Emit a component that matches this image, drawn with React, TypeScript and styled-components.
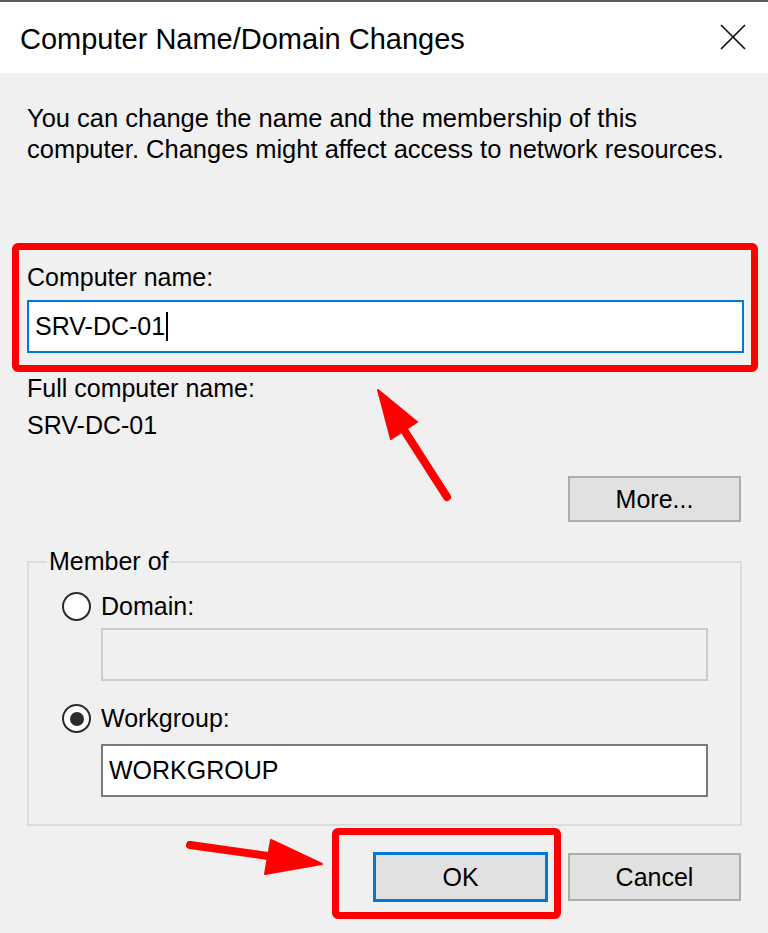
import styled, { createGlobalStyle } from "styled-components";

const GlobalStyle = createGlobalStyle`
  html, body {
    margin: 0;
    padding: 0;
    background: #f0f0f0;
  }
  body {
    font-family: "Liberation Sans", Arial, sans-serif;
    color: #000;
  }
`;

const Window = styled.div`
  position: relative;
  width: 768px;
  height: 933px;
  overflow: hidden;
  background: #f0f0f0;
`;

const TitleBar = styled.div`
  height: 71px;
  border-top: 2px solid #5a5a5a;
  background: #fff;
  display: flex;
  align-items: center;
  justify-content: space-between;
  padding: 0 22px 0 20px;
`;

const Title = styled.div`
  font-size: 29px;
  line-height: 34px;
  margin-top: 2px;
`;

const CloseButton = styled.div`
  width: 26px;
  height: 26px;
  display: flex;
  margin-top: -1px;
`;

const Body = styled.div`
  padding: 30px 26px 0 27px;
  font-size: 25px;
  line-height: 31px;
`;

const Description = styled.p`
  margin: 0;
  font-size: 25.5px;
`;

const Label = styled.div<{ $top?: number }>`
  margin-top: ${(p) => p.$top ?? 0}px;
  white-space: nowrap;
`;

const Highlight = styled.div<{ $inset: string }>`
  position: relative;
  &::after {
    content: "";
    position: absolute;
    inset: ${(p) => p.$inset};
    border: 7px solid #ff0000;
    border-radius: 6px;
    pointer-events: none;
  }
`;

const NameSection = styled(Highlight)`
  margin-top: 97px;
`;

const TextBox = styled.div<{ $variant: "focus" | "normal" | "disabled"; $top: number }>`
  margin-top: ${(p) => p.$top}px;
  height: 53px;
  box-sizing: border-box;
  display: flex;
  align-items: center;
  padding: 0 6px;
  background: ${(p) => (p.$variant === "disabled" ? "#f0f0f0" : "#fff")};
  border: 2px solid
    ${(p) =>
      p.$variant === "focus"
        ? "#0078d7"
        : p.$variant === "disabled"
        ? "#cccccc"
        : "#7a7a7a"};
`;

const WideTextBox = styled(TextBox)`
  margin-right: -2px;
`;

const Caret = styled.span`
  display: inline-block;
  width: 2px;
  height: 29px;
  background: #000;
  margin-left: 1px;
`;

const ButtonRow = styled.div<{ $top: number }>`
  margin-top: ${(p) => p.$top}px;
  display: flex;
  justify-content: flex-end;
  align-items: flex-start;
  gap: 20px;
  padding-right: 1px;
`;

const Button = styled.div<{ $primary?: boolean; $width: number; $height?: number }>`
  width: ${(p) => p.$width}px;
  height: ${(p) => p.$height ?? (p.$primary ? 50 : 48)}px;
  margin-top: ${(p) => (p.$primary || p.$height ? 0 : 1)}px;
  box-sizing: border-box;
  background: #e1e1e1;
  border: ${(p) => (p.$primary ? "3px solid #0078d7" : "2px solid #adadad")};
  display: flex;
  align-items: center;
  justify-content: center;
  font-size: 25px;
`;

const GroupBox = styled.fieldset`
  margin: 24px 0 0;
  min-width: 0;
  border: 2px solid #dcdcdc;
  padding: 0 32px 27px 33px;
`;

const GroupLegend = styled.legend`
  margin-left: -15px;
  padding: 0 2px;
  line-height: 31px;
`;

const RadioRow = styled.div<{ $top: number }>`
  margin-top: ${(p) => p.$top}px;
  display: flex;
  align-items: center;
  gap: 10px;
  height: 31px;
`;

const Radio = styled.span<{ $checked?: boolean }>`
  width: 29px;
  height: 29px;
  box-sizing: border-box;
  border-radius: 50%;
  border: 2.5px solid #2b2b2b;
  background: #fff;
  display: flex;
  align-items: center;
  justify-content: center;
  &::before {
    content: "";
    width: 14px;
    height: 14px;
    border-radius: 50%;
    background: ${(p) => (p.$checked ? "#2b2b2b" : "transparent")};
  }
`;

const IndentedBox = styled(TextBox)`
  margin-left: 39px;
`;

const Annotations = styled.svg`
  position: absolute;
  left: 0;
  top: 0;
  pointer-events: none;
`;

export default function App() {
  return (
    <Window>
      <GlobalStyle />
      <TitleBar>
        <Title>Computer Name/Domain Changes</Title>
        <CloseButton>
          <svg width="26" height="26" viewBox="0 0 26 26">
            <path d="M1 1 L25 25 M25 1 L1 25" stroke="#111" strokeWidth="1.7" fill="none" />
          </svg>
        </CloseButton>
      </TitleBar>

      <Body>
        <Description>
          You can change the name and the membership of this
          <br />
          computer. Changes might affect access to network resources.
        </Description>

        <NameSection $inset="-19px -16px -19px -15px">
          <Label>Computer name:</Label>
          <WideTextBox $variant="focus" $top={7}>
            SRV-DC-01
            <Caret />
          </WideTextBox>
        </NameSection>

        <Label $top={20}>Full computer name:</Label>
        <Label $top={6}>SRV-DC-01</Label>

        <ButtonRow $top={35}>
          <Button $width={173} $height={46}>
            More...
          </Button>
        </ButtonRow>

        <GroupBox>
          <GroupLegend>Member of</GroupLegend>
          <RadioRow $top={14}>
            <Radio />
            Domain:
          </RadioRow>
          <IndentedBox $variant="disabled" $top={6} />
          <RadioRow $top={22}>
            <Radio $checked />
            Workgroup:
          </RadioRow>
          <IndentedBox $variant="normal" $top={10}>
            WORKGROUP
          </IndentedBox>
        </GroupBox>

        <ButtonRow $top={26}>
          <Highlight $inset="-24px -13px -17px -41px">
            <Button $primary $width={175}>
              OK
            </Button>
          </Highlight>
          <Button $width={173}>Cancel</Button>
        </ButtonRow>
      </Body>

      <Annotations width="768" height="933" viewBox="0 0 768 933">
        <g fill="#ff0000" stroke="#ff0000" strokeLinecap="round" strokeLinejoin="round">
          <line x1="447" y1="497" x2="404" y2="430" strokeWidth="8" />
          <polygon points="378,390 417,422 391,439" strokeWidth="2" />
          <line x1="190" y1="845" x2="268" y2="856" strokeWidth="8" />
          <polygon points="322,864 271,840 265,874" strokeWidth="2" />
        </g>
      </Annotations>
    </Window>
  );
}
